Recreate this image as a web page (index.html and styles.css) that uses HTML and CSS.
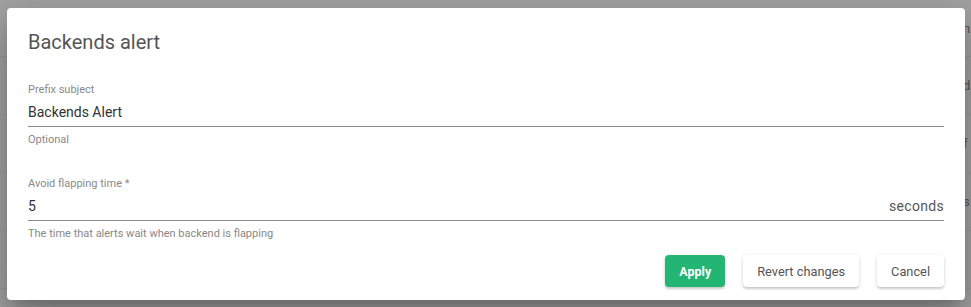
FILE: index.html
```html
<!DOCTYPE html>
<html>
<head>
<meta charset="utf-8">
<link rel="stylesheet" href="styles.css">
</head>
<body>
<div class="backdrop">
  <div class="row"><span class="cell">n</span></div>
  <div class="row"><span class="cell">d</span></div>
  <div class="row"><span class="cell">f</span></div>
  <div class="row"><span class="cell">s</span></div>
  <div class="row"><span class="cell"></span></div>
</div>
<div class="dialog">
  <h2 class="title">Backends alert</h2>
  <div class="field">
    <label class="label">Prefix subject</label>
    <div class="input-line"><span class="value">Backends Alert</span></div>
    <div class="hint">Optional</div>
  </div>
  <div class="field field-second">
    <label class="label">Avoid flapping time *</label>
    <div class="input-line"><span class="value">5</span><span class="suffix">seconds</span></div>
    <div class="hint">The time that alerts wait when backend is flapping</div>
  </div>
  <div class="actions">
    <button class="btn btn-primary">Apply</button>
    <button class="btn">Revert changes</button>
    <button class="btn">Cancel</button>
  </div>
</div>
</body>
</html>
```
FILE: styles.css
```css
html, body {
  margin: 0;
  padding: 0;
}
body {
  width: 971px;
  height: 307px;
  overflow: hidden;
  background: #a3a3a3;
  font-family: Roboto, "Liberation Sans", sans-serif;
  position: relative;
}
.backdrop {
  display: flex;
  flex-direction: column;
}
.row {
  height: 57px;
  border-bottom: 1px solid #999;
  display: flex;
  align-items: center;
  padding-left: 963px;
  color: #555;
  font-size: 13px;
  white-space: nowrap;
  overflow: hidden;
}
.row:first-child {
  height: 56px;
}
.dialog {
  position: absolute;
  left: 7px;
  top: 8px;
  width: 958px;
  height: 292px;
  box-sizing: border-box;
  background: #fff;
  border-radius: 4px;
  box-shadow: 0 11px 15px -7px rgba(0,0,0,.2), 0 24px 38px 3px rgba(0,0,0,.14), 0 9px 46px 8px rgba(0,0,0,.12);
  padding: 20px 21px 0 21px;
  display: flex;
  flex-direction: column;
}
.title {
  margin: 0;
  font-size: 20px;
  font-weight: 400;
  color: #555;
  line-height: 28px;
}
.field {
  margin-top: 27px;
  display: flex;
  flex-direction: column;
}
.field-second {
  margin-top: 31px;
}
.label {
  font-size: 11px;
  color: #8a8a8a;
  line-height: 13px;
}
.input-line {
  display: flex;
  justify-content: space-between;
  align-items: baseline;
  border-bottom: 1px solid #8a8a8a;
  padding: 7px 0 5px 0;
  font-size: 14px;
  line-height: 18px;
  color: #333;
}
.suffix {
  color: #555;
  letter-spacing: 0.3px;
}
.hint {
  font-size: 11px;
  color: #888;
  line-height: 13px;
  margin-top: 6px;
}
.actions {
  display: flex;
  justify-content: flex-end;
  gap: 18px;
  margin-top: 15px;
}
.btn {
  font-family: Roboto, "Liberation Sans", sans-serif;
  font-size: 12.8px;
  font-weight: 400;
  color: #555;
  background: #fff;
  border: none;
  border-radius: 4px;
  height: 32px;
  padding: 0 14px;
  box-shadow: 0 2px 2px rgba(0,0,0,.14), 0 1px 4px rgba(0,0,0,.12);
}
.btn-primary {
  background: #22b573;
  color: #fff;
  font-size: 12.5px;
  font-weight: 700;
  padding: 0 14px;
}
```
